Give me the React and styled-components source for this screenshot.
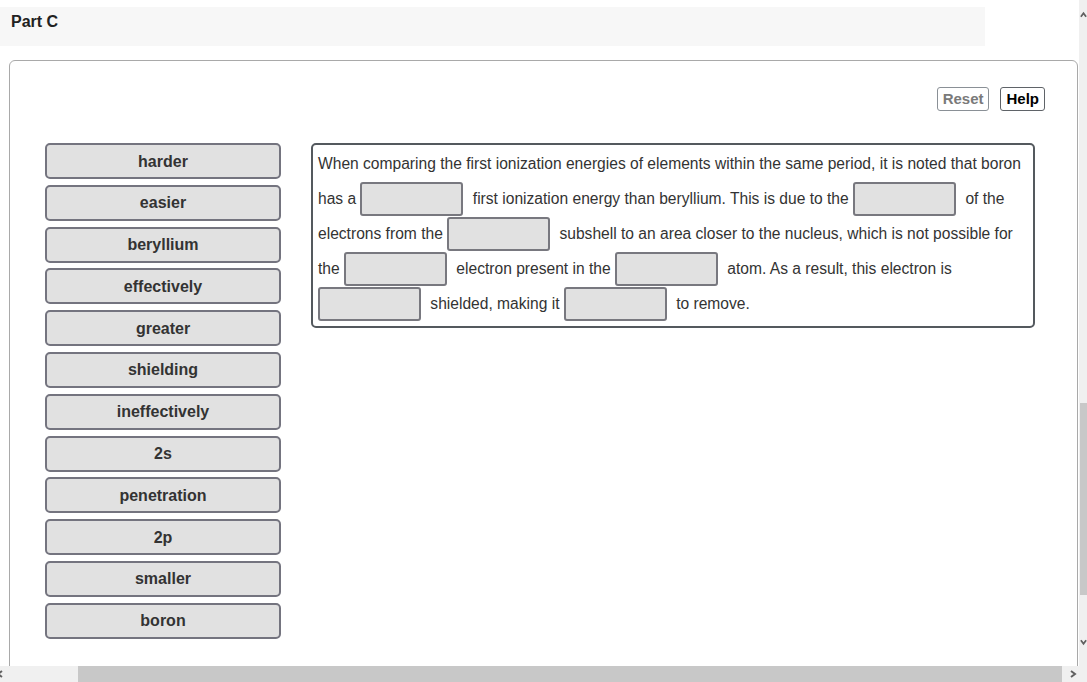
import styled, { createGlobalStyle } from "styled-components";

const Global = createGlobalStyle`
  html, body {
    margin: 0;
    padding: 0;
    overflow: hidden;
    background: #ffffff;
  }
  body {
    font-family: "Liberation Sans", Arial, sans-serif;
  }
`;

const Screen = styled.div`
  width: 1087px;
  height: 682px;
  display: grid;
  grid-template-columns: 1079px 8px;
  grid-template-rows: 666px 16px;
  overflow: hidden;
`;

const Viewport = styled.div`
  grid-column: 1;
  grid-row: 1;
  overflow: hidden;
`;

const Header = styled.div`
  margin-top: 7px;
  width: 985px;
  height: 39px;
  box-sizing: border-box;
  padding: 5px 0 0 11px;
  background: #f7f7f7;
  font-size: 16px;
  line-height: 20px;
  font-weight: bold;
  color: #222;
`;

const Panel = styled.div`
  margin: 14px 0 0 9px;
  width: 1069px;
  height: 700px;
  box-sizing: border-box;
  border: 1px solid #a9a9a9;
  border-radius: 6px;
  padding: 26px 32px 0 35px;
`;

const Toolbar = styled.div`
  display: flex;
  justify-content: flex-end;
  gap: 11px;
`;

const ToolButton = styled.button`
  height: 24px;
  padding: 0 5px;
  box-sizing: border-box;
  background: #fff;
  border: 1px solid ${(p) => (p.$muted ? "#8a9096" : "#5f6368")};
  border-radius: 3px;
  font-family: "Liberation Sans", Arial, sans-serif;
  font-size: 15px;
  font-weight: bold;
  color: ${(p) => (p.$muted ? "#7a7a7a" : "#000")};
  line-height: 20px;
`;

const Content = styled.div`
  display: flex;
  gap: 30px;
  margin-top: 32px;
  align-items: flex-start;
`;

const WordBank = styled.div`
  width: 236px;
  flex: none;
  display: flex;
  flex-direction: column;
  gap: 5.8px;
`;

const Tile = styled.div`
  height: 36px;
  box-sizing: border-box;
  border: 2px solid #74747f;
  border-radius: 5px;
  background: #e1e1e1;
  display: flex;
  align-items: center;
  justify-content: center;
  padding-top: 1px;
  font-size: 16px;
  font-weight: bold;
  color: #333;
`;

const Passage = styled.div`
  width: 724px;
  flex: none;
  box-sizing: border-box;
  border: 2px solid #54595e;
  border-radius: 5px;
  padding: 1px 4px 5px 5px;
  font-size: 15.6px;
  line-height: 35px;
  color: #333;
`;

const Blank = styled.span`
  display: inline-block;
  vertical-align: middle;
  width: 103px;
  height: 34px;
  box-sizing: border-box;
  border: 2px solid #78787f;
  border-radius: 3px;
  background: #e1e1e1;
  margin-right: 5px;
  margin-top: -2px;
`;

const VBar = styled.div`
  grid-column: 2;
  grid-row: 1 / span 2;
  background: #f0f0f0;
  display: flex;
  flex-direction: column;
  padding-left: 1px;
  overflow: hidden;
`;

const VThumb = styled.div`
  height: 192px;
  background: #c8c8c8;
`;

const Spacer = styled.div`
  height: ${(p) => p.$h}px;
  flex: ${(p) => (p.$h ? "none" : 1)};
`;

const Arrow = styled.div`
  height: ${(p) => p.$h || 14}px;
  flex: none;
  display: flex;
  align-items: center;
`;

const HBar = styled.div`
  grid-column: 1;
  grid-row: 2;
  background: #f0f0f0;
  display: flex;
  align-items: stretch;
  overflow: hidden;
`;

const HThumb = styled.div`
  margin-left: 74px;
  width: 984px;
  background: #c8c8c8;
`;

const words = [
  "harder",
  "easier",
  "beryllium",
  "effectively",
  "greater",
  "shielding",
  "ineffectively",
  "2s",
  "penetration",
  "2p",
  "smaller",
  "boron",
];

function Chevron({ dir }) {
  const paths = {
    up: "M1 6 L4 2 L7 6",
    down: "M1 2 L4 6 L7 2",
    left: "M6 1 L2 4 L6 7",
    right: "M2 1 L6 4 L2 7",
  };
  return (
    <svg width="8" height="8" viewBox="0 0 8 8">
      <path d={paths[dir]} fill="none" stroke="#606060" strokeWidth="2" />
    </svg>
  );
}

export default function App() {
  return (
    <>
      <Global />
      <Screen>
        <Viewport>
          <Header>Part C</Header>
          <Panel>
            <Toolbar>
              <ToolButton $muted>Reset</ToolButton>
              <ToolButton>Help</ToolButton>
            </Toolbar>
            <Content>
              <WordBank>
                {words.map((w) => (
                  <Tile key={w}>{w}</Tile>
                ))}
              </WordBank>
              <Passage>
                When comparing the first ionization energies of elements within
                the same period, it is noted that boron has a <Blank /> first
                ionization energy than beryllium. This is due to the <Blank /> of
                the electrons from the <Blank /> subshell to an area closer to the
                nucleus, which is not possible for the <Blank /> electron present
                in the <Blank /> atom. As a result, this electron is <Blank />{" "}
                shielded, making it <Blank /> to remove.
              </Passage>
            </Content>
          </Panel>
        </Viewport>
        <VBar>
          <Arrow $h={30}>
            <Chevron dir="up" />
          </Arrow>
          <Spacer $h={373} />
          <VThumb />
          <Spacer />
          <Arrow $h={40}>
            <Chevron dir="down" />
          </Arrow>
          <Spacer $h={20} />
        </VBar>
        <HBar>
          <Arrow $h={16} style={{ marginLeft: -4 }}>
            <Chevron dir="left" />
          </Arrow>
          <HThumb />
          <Arrow $h={16} style={{ marginLeft: 7 }}>
            <Chevron dir="right" />
          </Arrow>
        </HBar>
      </Screen>
    </>
  );
}
